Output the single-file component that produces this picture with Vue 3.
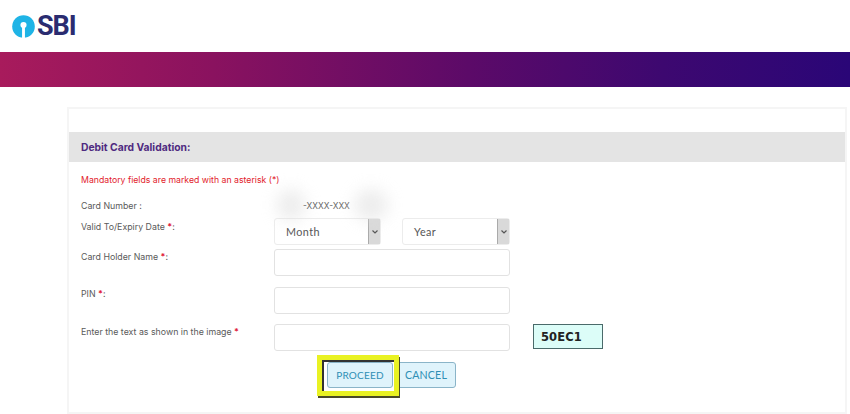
<script setup>
const rows = [
  { label: 'Card Holder Name ', suffix: ':' , cls: 'r-holder' },
  { label: 'PIN ', suffix: ':', cls: 'r-pin' },
]
</script>

<template>
  <div class="page">
    <header class="top">
      <svg class="mark" width="23" height="23" viewBox="0 0 24 24" aria-hidden="true">
        <circle cx="12" cy="12" r="11.8" fill="#1fb4e6" />
        <circle cx="12" cy="10.5" r="3.2" fill="#fff" />
        <rect x="10.5" y="11" width="3" height="13" fill="#fff" />
      </svg>
      <span class="brand">SBI</span>
    </header>
    <div class="band"></div>

    <main class="card">
      <div class="card-top"></div>
      <h2 class="title">Debit Card Validation:</h2>
      <div class="body">
        <p class="note">Mandatory fields are marked with an asterisk (*)</p>

        <div class="row r-card">
          <label>Card Number :</label>
          <div class="masked">
            <span class="blob b1"></span>
            <span class="num">-XXXX-XXX</span>
            <span class="blob b2"></span>
          </div>
        </div>

        <div class="row r-date">
          <label>Valid To/Expiry Date <b>*</b>:</label>
          <div class="selects">
            <div class="select s-month"><span>Month</span><i class="arrow"><svg width="8" height="6" viewBox="0 0 8 6"><path d="M1.5 1.5 4 4l2.5-2.5" fill="none" stroke="#555" stroke-width="1.2" /></svg></i></div>
            <div class="select s-year"><span>Year</span><i class="arrow"><svg width="8" height="6" viewBox="0 0 8 6"><path d="M1.5 1.5 4 4l2.5-2.5" fill="none" stroke="#555" stroke-width="1.2" /></svg></i></div>
          </div>
        </div>

        <div v-for="r in rows" :key="r.cls" class="row" :class="r.cls">
          <label>{{ r.label }}<b>*</b>{{ r.suffix }}</label>
          <div class="input"></div>
        </div>

        <div class="row r-captcha">
          <label>Enter the text as shown in the image <b>*</b></label>
          <div class="input"></div>
          <div class="captcha">50EC1</div>
        </div>

        <div class="actions">
          <div class="btn proceed">PROCEED<span class="mark-box"></span></div>
          <div class="btn cancel">CANCEL</div>
        </div>
      </div>
    </main>
  </div>
</template>

<style>
html, body { margin: 0; background: #fff; overflow: hidden; }
</style>

<style scoped>
.page {
  width: 850px;
  height: 414px;
  overflow: hidden;
  font-family: "Inter", "Liberation Sans", sans-serif;
  color: #555;
}
.top {
  height: 52px;
  box-sizing: border-box;
  padding: 15px 0 0 12px;
  display: flex;
  align-items: flex-start;
  gap: 2px;
}
.mark { display: block; }
.brand {
  font-family: "Roboto", "Liberation Sans", sans-serif;
  font-weight: 700;
  font-size: 27px;
  line-height: 23px;
  letter-spacing: -1.1px;
  color: #2a2c70;
}
.band {
  height: 35px;
  background: linear-gradient(90deg, #a81b5c 0%, #8a125f 25%, #5c0a68 55%, #3d0870 78%, #2a0677 100%);
}
.card {
  margin: 20px 3px 0 67px;
  border: 2px solid #f5f5f5;
  height: 307px;
  box-sizing: border-box;
  background: #fff;
}
.card-top { height: 23px; }
.title {
  margin: 0;
  height: 30px;
  line-height: 31px;
  padding-left: 12px;
  background: #e4e4e4;
  font-size: 10.3px;
  font-weight: 700;
  color: #4f2a80;
}
.body { padding: 0 0 0 12px; }
.note {
  margin: 0;
  padding-top: 13px;
  font-size: 8.72px;
  line-height: 11px;
  color: #e21c2c;
}
.row {
  display: flex;
  align-items: flex-start;
}
.row label {
  width: 193px;
  flex: none;
  font-size: 8.8px;
  line-height: 12px;
  color: #5a5a5a;
}
.row label b { color: #e0203a; font-weight: 700; }
.r-card { margin-top: 14px; height: 14px; }
.r-date { height: 35px; }
.r-date label { padding-top: 7px; }
.r-holder { height: 38px; }
.r-holder label { padding-top: 2px; }
.r-pin { height: 37px; }
.r-pin label { padding-top: 1px; }
.r-captcha label { padding-top: 2px; }
.masked {
  position: relative;
  z-index: 1;
  padding-left: 29px;
  font-size: 8.4px;
  line-height: 12px;
  color: #666;
}
.blob {
  position: absolute;
  top: -11px;
  height: 32px;
  background: #dedede;
  border-radius: 50%;
  filter: blur(8px);
  opacity: .55;
}
.b1 { left: 3px; width: 28px; }
.b2 { left: 80px; width: 34px; }
.num { position: relative; }
.selects { display: flex; gap: 21px; margin-top: 4px; }
.select {
  height: 27px;
  box-sizing: border-box;
  border: 1px solid #ececec;
  border-radius: 3px;
  display: flex;
  align-items: center;
  justify-content: space-between;
  padding-left: 11px;
  font-family: "Lato", sans-serif;
  font-size: 10.8px;
  letter-spacing: .4px;
  color: #555;
}
.s-month { width: 107px; }
.s-year { width: 108px; }
.arrow {
  width: 12px;
  height: 25px;
  background: #d9d9d9;
  border-left: 1px solid #aaa;
  display: flex;
  align-items: center;
  justify-content: center;
  box-sizing: border-box;
}
.input {
  width: 236px;
  height: 27px;
  box-sizing: border-box;
  border: 1px solid #e2e2e2;
  border-radius: 3px;
  background: #fff;
}
.captcha {
  margin-left: 23px;
  width: 70px;
  height: 25px;
  box-sizing: border-box;
  border: 1px solid #4a6a6a;
  background: #dcfdf8;
  padding-left: 7px;
  font-family: "DejaVu Sans", sans-serif;
  font-weight: 700;
  font-size: 11.5px;
  letter-spacing: .1px;
  line-height: 25px;
  color: #222;
}
.actions {
  display: flex;
  margin: 11px 0 0 246px;
  gap: 3px;
}
.btn {
  height: 26px;
  box-sizing: border-box;
  border: 1px solid #8ab4c8;
  border-radius: 3px;
  background: #dff3fb;
  color: #2e8fb5;
  font-family: "Lato", sans-serif;
  font-size: 10px;
  line-height: 24px;
  text-align: center;
  letter-spacing: .2px;
}
.proceed { width: 66px; position: relative; }
.cancel { width: 60px; font-size: 10.6px; }
.mark-box {
  position: absolute;
  left: -11px;
  top: -8px;
  width: 82px;
  height: 41px;
  box-sizing: border-box;
  border: 5px solid #e9f223;
  box-shadow: 1px 2px 0 #4a4a2a, inset 2px 2px 0 #333;
}
</style>
